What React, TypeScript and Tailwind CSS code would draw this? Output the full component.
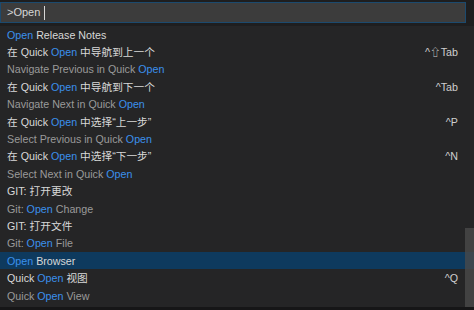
import React from 'react';

type Item = {
  label: string;
  detail?: string;
  keys?: string;
  selected?: boolean;
};

const items: Item[] = [
  { label: 'Open Release Notes' },
  { label: '在 Quick Open 中导航到上一个', detail: 'Navigate Previous in Quick Open', keys: '^⇧Tab' },
  { label: '在 Quick Open 中导航到下一个', detail: 'Navigate Next in Quick Open', keys: '^Tab' },
  { label: '在 Quick Open 中选择“上一步”', detail: 'Select Previous in Quick Open', keys: '^P' },
  { label: '在 Quick Open 中选择“下一步”', detail: 'Select Next in Quick Open', keys: '^N' },
  { label: 'GIT: 打开更改', detail: 'Git: Open Change' },
  { label: 'GIT: 打开文件', detail: 'Git: Open File' },
  { label: 'Open Browser', selected: true },
  { label: 'Quick Open 视图', detail: 'Quick Open View', keys: '^Q' },
];

// split text on "Open" so the match gets the blue highlight
function Highlight({ text }: { text: string }) {
  const parts = text.split(/(Open)/);
  return (
    <span className="whitespace-pre">
      {parts.map((p, i) =>
        p === 'Open' ? (
          <span key={i} className="text-[#3b90ec]">
            {p}
          </span>
        ) : (
          <span key={i}>{p}</span>
        )
      )}
    </span>
  );
}

function Row({ item }: { item: Item }) {
  return (
    <div className={item.selected ? 'bg-[#0e3a5e] pl-[7px] pr-[16px]' : 'pl-[7px] pr-[16px]'}>
      <div className="flex h-[17.4px] items-center justify-between text-[#d8d8d8]">
        <Highlight text={item.label} />
        {item.keys && <span className="text-[#cfcfcf]">{item.keys}</span>}
      </div>
      {item.detail && (
        <div className="flex h-[17.4px] items-center text-[#9a9a9a]">
          <Highlight text={item.detail} />
        </div>
      )}
    </div>
  );
}

export default function App() {
  return (
    <div
      className="relative h-[310px] w-[474px] overflow-hidden bg-[#252526] text-[10.7px]"
      style={{ fontFamily: '"Liberation Sans", "Noto Sans CJK SC", sans-serif' }}
    >
      {/* Input */}
      <div className="bg-[#1e1e1f] pb-[3px] pr-[8px] pt-[2px]">
        <div className="flex h-[21px] items-center border border-[#1c4a6e] bg-[#3c3c3c] pl-[6px] text-[11px] text-[#d6d6d6]">
          <span>&gt;Open</span>
          <span className="ml-[4px] h-[14px] w-px bg-[#d6d6d6]" />
        </div>
      </div>

      {/* Results */}
      <div>
        {items.map(item => (
          <Row key={item.label} item={item} />
        ))}
      </div>

      {/* Scrollbar */}
      <div className="absolute right-0 top-[228px] h-[79px] w-[9px] bg-[#4a4a4a]/80" />
      <div className="absolute bottom-0 left-0 h-[3px] w-full bg-[#161617]" />
    </div>
  );
}
